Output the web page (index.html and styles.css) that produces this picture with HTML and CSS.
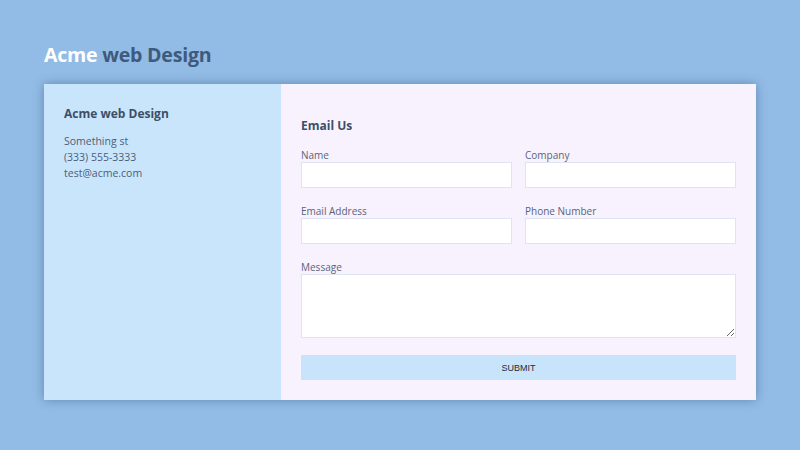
FILE: index.html
```html
<!DOCTYPE html>
<html>
<head>
<meta charset="utf-8">
<link rel="stylesheet" href="styles.css">
</head>
<body>
<div class="page">
  <h1 class="brand"><span class="brand-acme">Acme</span> web Design</h1>
  <div class="card">
    <div class="info">
      <h3 class="info-title">Acme web Design</h3>
      <ul class="info-list">
        <li>Something st</li>
        <li>(333) 555-3333</li>
        <li>test@acme.com</li>
      </ul>
    </div>
    <div class="contact">
      <h3 class="contact-title">Email Us</h3>
      <form class="form">
        <div class="field">
          <label class="label">Name</label>
          <input class="input" type="text">
        </div>
        <div class="field">
          <label class="label">Company</label>
          <input class="input" type="text">
        </div>
        <div class="field">
          <label class="label">Email Address</label>
          <input class="input" type="text">
        </div>
        <div class="field">
          <label class="label">Phone Number</label>
          <input class="input" type="text">
        </div>
        <div class="field full">
          <label class="label">Message</label>
          <textarea class="textarea"></textarea>
        </div>
        <div class="field full">
          <button class="submit" type="button">SUBMIT</button>
        </div>
      </form>
    </div>
  </div>
</div>
</body>
</html>
```
FILE: styles.css
```css
* { box-sizing: border-box; }
html, body { margin: 0; padding: 0; }
body {
  background: #92bce6;
  font-family: "Open Sans", "Noto Sans", sans-serif;
  color: #3c4f68;
  width: 800px;
  height: 450px;
  overflow: hidden;
}
.page {
  padding: 0 44px;
}
.brand {
  margin: 0;
  padding-top: 41px;
  height: 84px;
  font-size: 19.6px;
  font-weight: 700;
  color: #3e5a7c;
  line-height: 28px;
  letter-spacing: -0.25px;
}
.brand-acme { color: #ffffff; }
.card {
  display: grid;
  grid-template-columns: 237px 1fr;
  grid-template-rows: 316px;
  height: 316px;
  box-shadow: 0 0 10px rgba(40, 70, 110, 0.45);
}
.info {
  background: #c9e5fc;
  padding: 22px 20px;
}
.info-title {
  margin: 0 0 11px;
  font-size: 12px;
  font-weight: 700;
  line-height: 16px;
  color: #3c4f68;
}
.info-list {
  list-style: none;
  margin: 0;
  padding: 0;
  font-size: 10.5px;
  line-height: 16px;
  color: #4b5f78;
}
.contact {
  background: #f8f2fe;
  padding: 34px 20px 20px;
}
.contact-title {
  margin: 0 0 14px;
  font-size: 12px;
  font-weight: 700;
  line-height: 16px;
  color: #3c4f68;
}
.form {
  display: grid;
  grid-template-columns: 1fr 1fr;
  column-gap: 13px;
  row-gap: 16px;
}
.field { display: flex; flex-direction: column; }
.full { grid-column: 1 / span 2; }
.label {
  font-size: 10px;
  line-height: 14px;
  color: #5a6478;
}
.input {
  height: 26px;
  border: 1px solid #dfe4f3;
  background: #ffffff;
  margin: 0;
  padding: 0 6px;
}
.textarea {
  height: 64px;
  border: 1px solid #dfe4f3;
  background: #ffffff;
  margin: 0;
  resize: vertical;
}
.submit {
  height: 25px;
  margin: 1px 0 0;
  border: none;
  background: #c8e4fb;
  font-family: "Liberation Sans", Arial, sans-serif;
  font-size: 9px;
  color: #1f2a38;
  cursor: pointer;
}
```
